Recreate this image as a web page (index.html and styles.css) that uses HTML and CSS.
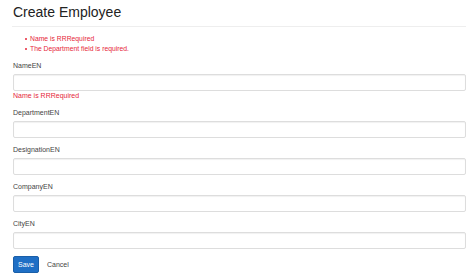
FILE: index.html
```html
<!DOCTYPE html>
<html>
<head>
<meta name="viewport" content="width=device-width, initial-scale=1">
<link rel="stylesheet" href="styles.css">
</head>
<body>

<div class="container">
  <h2 class="title">Create Employee</h2>
  <hr class="rule">

  <ul class="summary">
    <li>Name is RRRequired</li>
    <li>The Department field is required.</li>
  </ul>

  <form class="form">
    <div class="group">
      <label class="label">NameEN</label>
      <input type="text" class="field">
      <div class="error">Name is RRRequired</div>
    </div>
    <div class="group">
      <label class="label">DepartmentEN</label>
      <input type="text" class="field">
    </div>
    <div class="group">
      <label class="label">DesignationEN</label>
      <input type="text" class="field">
    </div>
    <div class="group">
      <label class="label">CompanyEN</label>
      <input type="text" class="field">
    </div>
    <div class="group">
      <label class="label">CityEN</label>
      <input type="text" class="field">
    </div>

    <div class="actions">
      <span class="saveBtn">Save</span>
      <a class="cancel" href="#">Cancel</a>
    </div>
  </form>
</div>

</body>
</html>
```

FILE: styles.css
```css
body {
  margin: 0;
  background: #fff;
  color: #444;
  font-family: "Liberation Sans", Arial, sans-serif;
  font-size: 7px;
}

* {
  box-sizing: border-box;
}

.container {
  padding: 0 8px 0 13px;
}

/* Page heading */
.title {
  margin: 0;
  padding-top: 4px;
  font-size: 14px;
  font-weight: normal;
  line-height: 17px;
  color: #222;
}

.rule {
  margin: 5px 0 7px -1px;
  border: 0;
  border-top: 1px solid #eee;
}

/* Validation summary */
.summary {
  margin: 0 0 7px 0;
  padding-left: 17px;
  list-style: none;
  color: #e6263a;
  font-size: 6.8px;
  line-height: 10px;
}

.summary li {
  position: relative;
}

.summary li::before {
  content: "";
  position: absolute;
  left: -5px;
  top: 4px;
  width: 2px;
  height: 2px;
  border-radius: 50%;
  background: #e6263a;
}

.group {
  margin-bottom: 7px;
}

.label {
  display: block;
  line-height: 10px;
  margin-bottom: 3px;
}

.field {
  display: block;
  width: 100%;
  height: 17px;
  margin: 0;
  padding: 3px 6px;
  border: 1px solid #ddd;
  border-radius: 2px;
  box-shadow: inset 0 1px 1px rgba(0, 0, 0, 0.06);
  font-size: 7px;
}

.error {
  color: #e6263a;
  line-height: 10px;
}

/* Buttons */
.actions {
  display: flex;
  align-items: center;
  gap: 8px;
}

.saveBtn {
  display: inline-block;
  width: 26px;
  height: 17px;
  line-height: 15px;
  text-align: center;
  color: #fff;
  background: #1f6fc5;
  border: 1px solid #1a5fa8;
  border-radius: 2px;
}

.cancel {
  color: #444;
  text-decoration: none;
}
```
